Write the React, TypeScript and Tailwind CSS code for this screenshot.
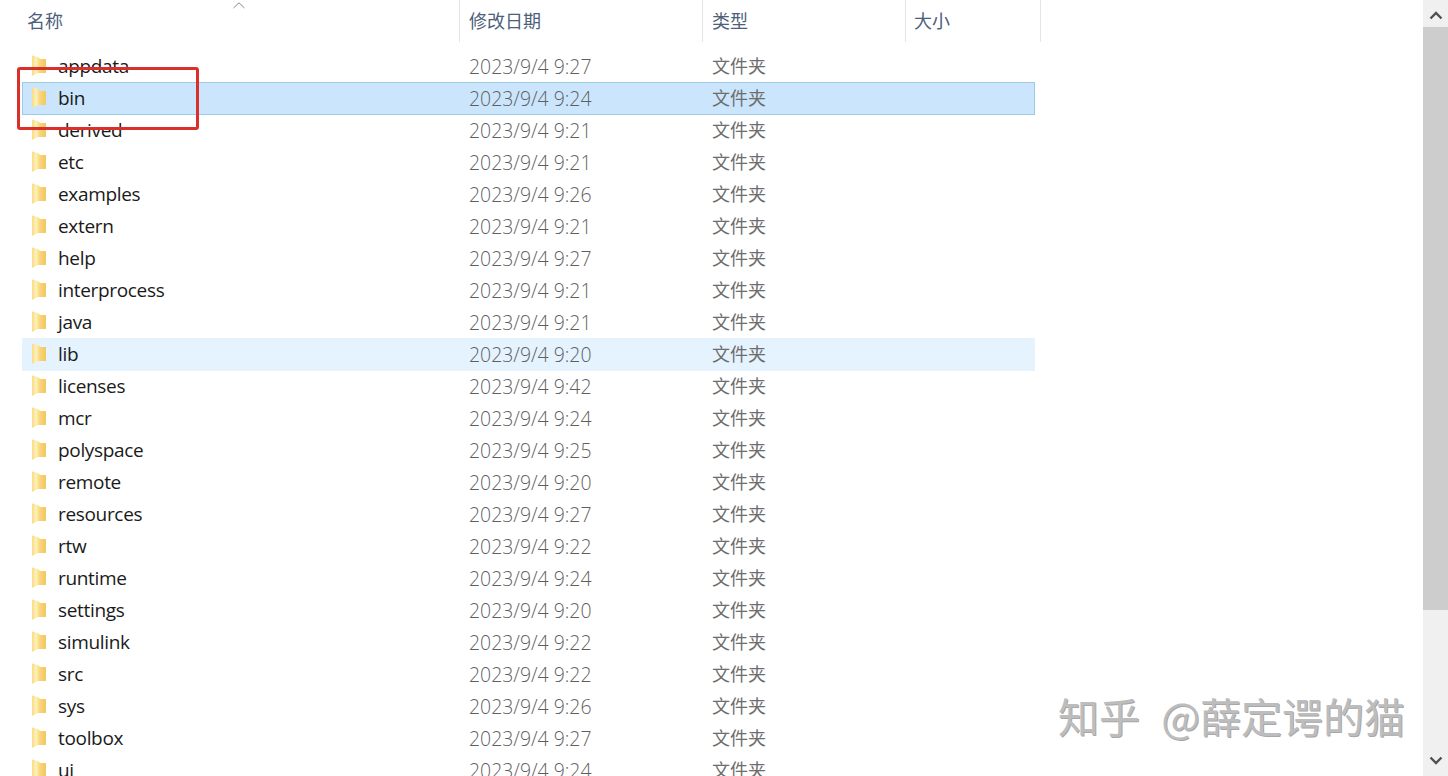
const rows: [string, string, string?][] = [
  ["appdata", "9:27"],
  ["bin", "9:24", "sel"],
  ["derived", "9:21"],
  ["etc", "9:21"],
  ["examples", "9:26"],
  ["extern", "9:21"],
  ["help", "9:27"],
  ["interprocess", "9:21"],
  ["java", "9:21"],
  ["lib", "9:20", "hover"],
  ["licenses", "9:42"],
  ["mcr", "9:24"],
  ["polyspace", "9:25"],
  ["remote", "9:20"],
  ["resources", "9:27"],
  ["rtw", "9:22"],
  ["runtime", "9:24"],
  ["settings", "9:20"],
  ["simulink", "9:22"],
  ["src", "9:22"],
  ["sys", "9:26"],
  ["toolbox", "9:27"],
  ["ui", "9:24"],
];

function Folder({ id }: { id: string }) {
  return (
    <svg width="16" height="22" viewBox="0 0 16 22" className="shrink-0">
      <defs>
        <linearGradient id={id} x1="0" y1="0" x2="1" y2="0">
          <stop offset="0" stopColor="#f8dc86" />
          <stop offset="0.3" stopColor="#fdf0bb" />
          <stop offset="0.55" stopColor="#f8d67c" />
          <stop offset="1" stopColor="#f2c85e" />
        </linearGradient>
      </defs>
      <path d="M1 0.5 L7 2 L9 4 L15 4 L15 18 L7 18 L1 21 Z" fill={`url(#${id})`} />
    </svg>
  );
}

function Head({ w, pl, label }: { w: string; pl: string; label: string }) {
  return (
    <div className={`${w} ${pl} h-full flex items-center border-r border-[#e5e5e5] text-[#4c607a] text-[18px] shrink-0`}>
      {label}
    </div>
  );
}

export default function App() {
  return (
    <div
      className="relative flex h-[776px] w-[1448px] overflow-hidden bg-white"
      style={{ fontFamily: '"Open Sans", "Noto Sans CJK SC", sans-serif' }}
    >
      <div className="flex-1 min-w-0">
        <div className="relative flex h-[42px]">
          <Head w="w-[460px]" pl="pl-[27px]" label="名称" />
          <Head w="w-[243px]" pl="pl-[9px]" label="修改日期" />
          <Head w="w-[203px]" pl="pl-[9px]" label="类型" />
          <Head w="w-[135px]" pl="pl-[8px]" label="大小" />
          <svg width="12" height="7" viewBox="0 0 12 7" className="absolute left-[233px] top-[2px]">
            <path d="M0.5 6 L6 0.8 L11.5 6" fill="none" stroke="#8a8a8a" strokeWidth="1" />
          </svg>
        </div>
        <div className="pt-2 pl-[22px]">
          {rows.map(([name, time, state]) => (
            <div
              key={name}
              className={`grid w-[1013px] grid-cols-[446px_243px_1fr] items-center border text-[19px] tracking-[-0.33px] ${
                state === "sel"
                  ? "relative mb-[-1px] h-[33px] pb-px border-[#9ccbe6] bg-[#cbe6fc]"
                  : state === "hover"
                    ? "relative mb-[-1px] h-[33px] pb-px border-[#e5f3ff] bg-[#e5f3ff]"
                    : "h-8 border-transparent"
              }`}
            >
              <div className="flex items-center pl-[8px] gap-[11px] text-[#1a1a1a]">
                <Folder id={`f-${name}`} />
                <span>{name}</span>
              </div>
              <span className="pt-px text-[#5f5f5f] text-[19.4px] font-light tracking-normal">2023/9/4 {time}</span>
              <span className="text-[#6d6d6d] text-[18px] tracking-normal">文件夹</span>
            </div>
          ))}
        </div>
      </div>

      <div className="flex w-[25px] shrink-0 flex-col bg-[#f0f0f0]">
        <div className="flex h-[27px] items-center justify-center pt-1">
          <svg width="14" height="9" viewBox="0 0 14 9">
            <path d="M1.5 7.5 L7 2 L12.5 7.5" fill="none" stroke="#505050" strokeWidth="2.4" />
          </svg>
        </div>
        <div className="h-[583px] bg-[#cdcdcd]" />
        <div className="flex-1" />
        <div className="flex h-[27px] items-center justify-center pb-1">
          <svg width="14" height="9" viewBox="0 0 14 9">
            <path d="M1.5 1.5 L7 7 L12.5 1.5" fill="none" stroke="#505050" strokeWidth="2.4" />
          </svg>
        </div>
      </div>

      <div className="absolute left-[17px] top-[67px] h-[63px] w-[182px] rounded-[3px] border-[3px] border-[#d9302a]" />
      <div
        className="absolute left-[1058px] top-[685px] whitespace-nowrap text-[41px] leading-[60px] text-[#bdbdbd] [word-spacing:12px]"
        style={{ fontFamily: '"Noto Sans CJK SC", sans-serif', textShadow: "1px 1px 0 #a8a8a8" }}
      >
        知乎 @薛定谔的猫
      </div>
    </div>
  );
}
